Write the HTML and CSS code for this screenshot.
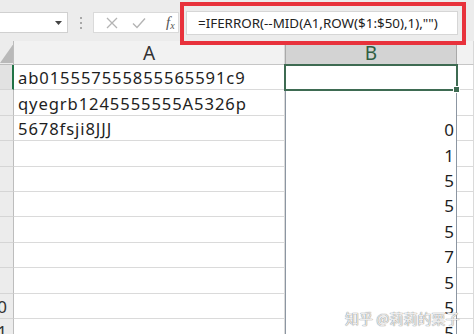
FILE: index.html
```html
<!DOCTYPE html>
<html>
<head>
<meta charset="utf-8">
<link rel="stylesheet" href="styles.css">
</head>
<body>
<div class="app">
  <div class="toolbar">
    <div class="namebox">
      <svg class="caret" width="7" height="4" viewBox="0 0 7 4"><path d="M0 0H7L3.5 4Z" fill="#444"/></svg>
    </div>
    <div class="sep"><i></i><i></i><i></i></div>
    <div class="fbtns">
      <svg class="fbtn" width="12" height="12" viewBox="0 0 12 12"><path d="M1 1L11 11M11 1L1 11" stroke="#b4b4b4" stroke-width="1.3" fill="none"/></svg>
      <svg class="fbtn" width="14" height="12" viewBox="0 0 14 12"><path d="M1 6.5L5 10.5L13 1.5" stroke="#b4b4b4" stroke-width="1.4" fill="none"/></svg>
      <span class="fx">f<sub>x</sub></span>
    </div>
    <div class="formula">=IFERROR(--MID(A1,ROW($1:$50),1),"")</div>
  </div>
  <div class="grid">
    <div class="corner"><svg width="14" height="22" viewBox="0 0 14 22"><path d="M14 2V22H0Z" fill="#b9b9b9"/></svg></div>
    <div class="ch">A</div>
    <div class="ch sel">B</div>
    <div class="ch last"></div>

    <div class="rh act"></div><div class="c a">ab015557555855565591c9</div><div class="c b"></div><div class="c z"></div>
    <div class="rh"></div><div class="c a">qyegrb1245555555A5326p</div><div class="c b"></div><div class="c z"></div>
    <div class="rh"></div><div class="c a">5678fsji8JJJ</div><div class="c b">0</div><div class="c z"></div>
    <div class="rh"></div><div class="c a"></div><div class="c b">1</div><div class="c z"></div>
    <div class="rh"></div><div class="c a"></div><div class="c b">5</div><div class="c z"></div>
    <div class="rh"></div><div class="c a"></div><div class="c b">5</div><div class="c z"></div>
    <div class="rh"></div><div class="c a"></div><div class="c b">5</div><div class="c z"></div>
    <div class="rh"></div><div class="c a"></div><div class="c b">7</div><div class="c z"></div>
    <div class="rh"></div><div class="c a"></div><div class="c b">5</div><div class="c z"></div>
    <div class="rh">10</div><div class="c a"></div><div class="c b">5</div><div class="c z"></div>
    <div class="rh">11</div><div class="c a"></div><div class="c b">5</div><div class="c z"></div>
  </div>
  <div class="activecell"><span class="handle"></span></div>
  <div class="redbox"></div>
  <div class="watermark">知乎 @莉莉的栗子</div>
</div>
</body>
</html>
```

FILE: styles.css
```css
html, body {
  margin: 0;
  padding: 0;
  background: #fff;
}
.app {
  position: relative;
  width: 474px;
  height: 334px;
  overflow: hidden;
  font-family: "Noto Sans", "Liberation Sans", sans-serif;
}
.toolbar {
  height: 41px;
  background: #ececec;
  display: flex;
  align-items: center;
  box-sizing: border-box;
  padding-top: 4px;
}
.namebox {
  width: 70px;
  height: 21px;
  margin-left: -2px;
  background: #fff;
  border: 1px solid #d0d0d0;
  box-sizing: border-box;
  display: flex;
  align-items: center;
  justify-content: flex-end;
  padding-right: 5px;
}
.sep {
  width: 25px;
  display: flex;
  flex-direction: column;
  align-items: center;
  gap: 3px;
}
.sep i {
  width: 2px;
  height: 2px;
  background: #a8a8a8;
}
.fbtns {
  width: 86px;
  height: 21px;
  background: #fff;
  border: 1px solid #dadada;
  box-sizing: border-box;
  display: flex;
  align-items: center;
  padding-left: 12px;
  gap: 14px;
}
.fx {
  font-family: "Liberation Serif", serif;
  font-style: italic;
  font-size: 15px;
  color: #555;
  margin-left: 6px;
}
.fx sub {
  font-size: 10px;
  vertical-align: -2px;
}
.formula {
  flex: 1;
  margin-left: 7px;
  margin-right: 16px;
  height: 24px;
  background: #fff;
  border: 1px solid #d6d6d6;
  box-sizing: border-box;
  font-size: 13.4px;
  color: #222;
  padding-left: 11px;
  line-height: 22px;
  white-space: nowrap;
}
.grid {
  display: grid;
  grid-template-columns: 14px 271px 172px 1fr;
  grid-template-rows: 24px repeat(11, 25.4px);
}
.corner {
  background: #ececec;
  border-right: 1px solid #bdbdbd;
  border-bottom: 1px solid #bdbdbd;
  box-sizing: border-box;
  overflow: hidden;
}
.corner svg { display: block; }
.ch {
  background: #f2f2f2;
  border-bottom: 1px solid #c6c6c6;
  border-right: 1px solid #d8d8d8;
  box-sizing: border-box;
  text-align: center;
  font-size: 19px;
  line-height: 24px;
  color: #333;
}
.ch.sel {
  background: #d3d3d3;
  color: #2f5e42;
  border-right: 1px solid #a9a9a9;
  border-left: 1px solid #a9a9a9;
}
.rh {
  background: #ececec;
  border-right: 1px solid #bdbdbd;
  border-bottom: 1px solid #d5d5d5;
  box-sizing: border-box;
  overflow: hidden;
  display: flex;
  justify-content: flex-end;
  align-items: flex-end;
  padding-right: 6px;
  font-size: 17px;
  line-height: 22px;
  color: #333;
  white-space: nowrap;
}
.rh.act {
  border-right: 2px solid #217346;
  background: #e2e2e2;
}
.c {
  box-sizing: border-box;
  border-bottom: 1px solid #dadada;
  border-right: 1px solid #dadada;
  font-size: 16.6px;
  letter-spacing: 0.9px;
  color: #1e1e1e;
  white-space: nowrap;
  display: flex;
  align-items: flex-end;
  line-height: 23px;
}
.c.a {
  padding-left: 4px;
}
.c.b {
  border-bottom: none;
  border-left: 1px solid #8c96a2;
  border-right: 1px solid #8c96a2;
  justify-content: flex-end;
  padding-right: 2px;
  letter-spacing: 0;
  font-size: 17px;
}
.activecell {
  position: absolute;
  left: 284px;
  top: 64px;
  width: 174px;
  height: 27px;
  border: 2px solid #3e6b52;
  box-sizing: border-box;
}
.handle {
  position: absolute;
  right: -4px;
  bottom: -4px;
  width: 5px;
  height: 5px;
  background: #3e6b52;
  border: 1px solid #fff;
}
.redbox {
  position: absolute;
  left: 180px;
  top: 2px;
  width: 286px;
  height: 43px;
  border: 4px solid #e8323c;
  box-sizing: border-box;
}
.watermark {
  position: absolute;
  left: 345px;
  top: 308px;
  font-family: "Noto Sans CJK SC", sans-serif;
  font-size: 14px;
  color: rgba(255, 255, 255, 0.85);
  text-shadow: 0 0 1px #888, 0 0 1px #888;
  white-space: nowrap;
}
```
